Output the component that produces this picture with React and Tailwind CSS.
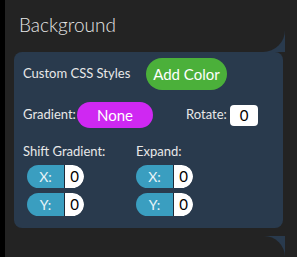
import React from "react";

const font = { fontFamily: 'Lato, "Noto Sans", sans-serif' };

function Pill({ label, value }) {
  return (
    <div className="flex h-[23px] w-[57px] overflow-hidden rounded-full">
      <div className="flex w-[37px] items-center justify-center bg-[#3a9ec0] text-[14px] text-[#e8f4f8]">
        {label}
      </div>
      <div className="flex flex-1 items-center justify-center rounded-r-full border-l border-[#1d2a38] bg-white text-[15px] text-black">
        {value}
      </div>
    </div>
  );
}

export default function App() {
  return (
    <div className="flex h-[257px] w-[297px] bg-[#232323]" style={font}>
      {/* left black strip */}
      <div className="w-[5px] bg-black" />

      {/* main column */}
      <div className="flex w-[280px] flex-col bg-[#293a4d]">
        <div className="flex h-[52px] items-center rounded-br-[22px] bg-[#232323] pl-[14px] pb-[2px]">
          <span className="text-[19px] font-light text-[#e6e6e6]">Background</span>
        </div>

        <div className="flex bg-[#232323] pl-[9px] pr-[2px] pb-[8px]">
          <div className="flex h-[176px] flex-1 flex-col rounded-[8px] bg-[#293a4d] px-[9px] pt-[6px]">
            {/* row 1 */}
            <div className="flex items-center">
              <span className="w-[123px] text-[13px] text-[#e8e8e8]">Custom CSS Styles</span>
              <button className="h-[32px] w-[81px] rounded-full bg-[#4bb03a] text-[15px] text-white">
                Add Color
              </button>
            </div>

            {/* row 2 */}
            <div className="mt-[12px] flex items-center">
              <span className="w-[54px] text-[13px] text-[#e8e8e8]">Gradient:</span>
              <button className="h-[26px] w-[76px] rounded-full bg-[#cf28f2] text-[15px] text-white">
                None
              </button>
              <span className="ml-[33px] w-[44px] text-[13px] text-[#e8e8e8]">Rotate:</span>
              <div className="flex h-[21px] w-[28px] items-center justify-center rounded-[4px] bg-white text-[15px] text-black">
                0
              </div>
            </div>

            {/* row 3 */}
            <div className="mt-[14px] flex">
              <div className="flex w-[113px] flex-col">
                <span className="text-[13px] text-[#e8e8e8]">Shift Gradient:</span>
                <div className="mt-[3px] flex flex-col gap-[5px] pl-[4px]">
                  <Pill label="X:" value="0" />
                  <Pill label="Y:" value="0" />
                </div>
              </div>
              <div className="flex flex-col">
                <span className="text-[13px] text-[#e8e8e8]">Expand:</span>
                <div className="mt-[3px] flex flex-col gap-[5px]">
                  <Pill label="X:" value="0" />
                  <Pill label="Y:" value="0" />
                </div>
              </div>
            </div>
          </div>
        </div>

        <div className="flex-1 rounded-tr-[22px] bg-[#232323]" />
      </div>

      <div className="flex-1" />
    </div>
  );
}
